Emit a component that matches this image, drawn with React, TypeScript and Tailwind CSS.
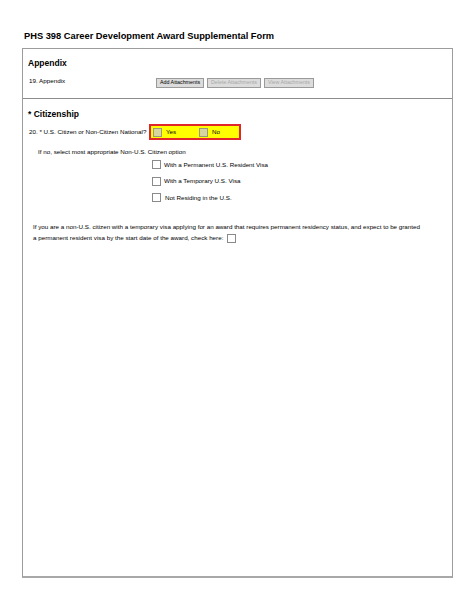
import React from "react";

function Box({ className = "" }: { className?: string }) {
  return <span className={`inline-block w-[9px] h-[9px] border border-[#8a8a8a] bg-white ${className}`} />;
}

function Btn({ label, disabled }: { label: string; disabled?: boolean }) {
  return (
    <div
      className={`h-[10px] px-[3px] flex items-center border border-[#9a9a9a] bg-[#dcdcdc] text-[5.3px] leading-none ${
        disabled ? "text-[#a8a8a8]" : "text-black"
      }`}
    >
      {label}
    </div>
  );
}

export default function App() {
  return (
    <div className="w-[474px] h-[608px] bg-white font-['Liberation_Sans',Arial,sans-serif] text-black">
      <div className="pt-[30px] pl-[24px] text-[9.3px] font-bold leading-[12px]">
        PHS 398 Career Development Award Supplemental Form
      </div>

      <div className="ml-[22px] mt-[6px] w-[431px] h-[530px] border border-[#9c9c9c] border-b-2 border-b-[#a8a8a8]">
        {/* Appendix */}
        <div className="h-[50px] border-b border-[#8c8c8c] px-[5px] pt-[9px]">
          <div className="text-[8.5px] font-bold leading-[10px]">Appendix</div>
          <div className="flex items-start mt-[9px]">
            <div className="w-[128px] pl-[1px] text-[6.25px] leading-[8px]">19. Appendix</div>
            <div className="flex gap-[3px] mt-[1px]">
              <Btn label="Add Attachments" />
              <Btn label="Delete Attachments" disabled />
              <Btn label="View Attachments" disabled />
            </div>
          </div>
        </div>

        {/* Citizenship */}
        <div className="px-[5px] pt-[10px] text-[6.25px]">
          <div className="text-[8.5px] font-bold leading-[10px]">* Citizenship</div>
          <div className="flex items-center mt-[5px] pl-[1px]">
            <div className="w-[120px] leading-[8px]">20. * U.S. Citizen or Non-Citizen National?</div>
            <div className="w-[92px] h-[16px] border-2 border-[#e0262b] bg-[#ffff00] flex items-center pl-[2px]">
              <span className="inline-block w-[9px] h-[9px] border border-[#9a9a7a] bg-[#d6d69e]" />
              <span className="ml-[4px] w-[33px]">Yes</span>
              <span className="inline-block w-[9px] h-[9px] border border-[#9a9a7a] bg-[#d6d69e]" />
              <span className="ml-[4px]">No</span>
            </div>
          </div>
          <div className="mt-[8px] pl-[10px] leading-[8px]">
            If no, select most appropriate Non-U.S. Citizen option
          </div>
          <div className="pl-[124px] flex flex-col gap-[7px] mt-[4px]">
            <div className="flex items-center">
              <Box />
              <span className="ml-[3px]">With a Permanent U.S. Resident Visa</span>
            </div>
            <div className="flex items-center">
              <Box />
              <span className="ml-[3px]">With a Temporary U.S. Visa</span>
            </div>
            <div className="flex items-center">
              <Box />
              <span className="ml-[4px]">Not Residing in the U.S.</span>
            </div>
          </div>
          <div className="mt-[19px] pl-[5px] leading-[11px] w-[395px]">
            If you are a non-U.S. citizen with a temporary visa applying for an award that requires permanent residency
            status, and expect to be granted a permanent resident visa by the start date of the award, check here:{" "}
            <Box className="align-middle ml-[2px]" />
          </div>
        </div>
      </div>
    </div>
  );
}
